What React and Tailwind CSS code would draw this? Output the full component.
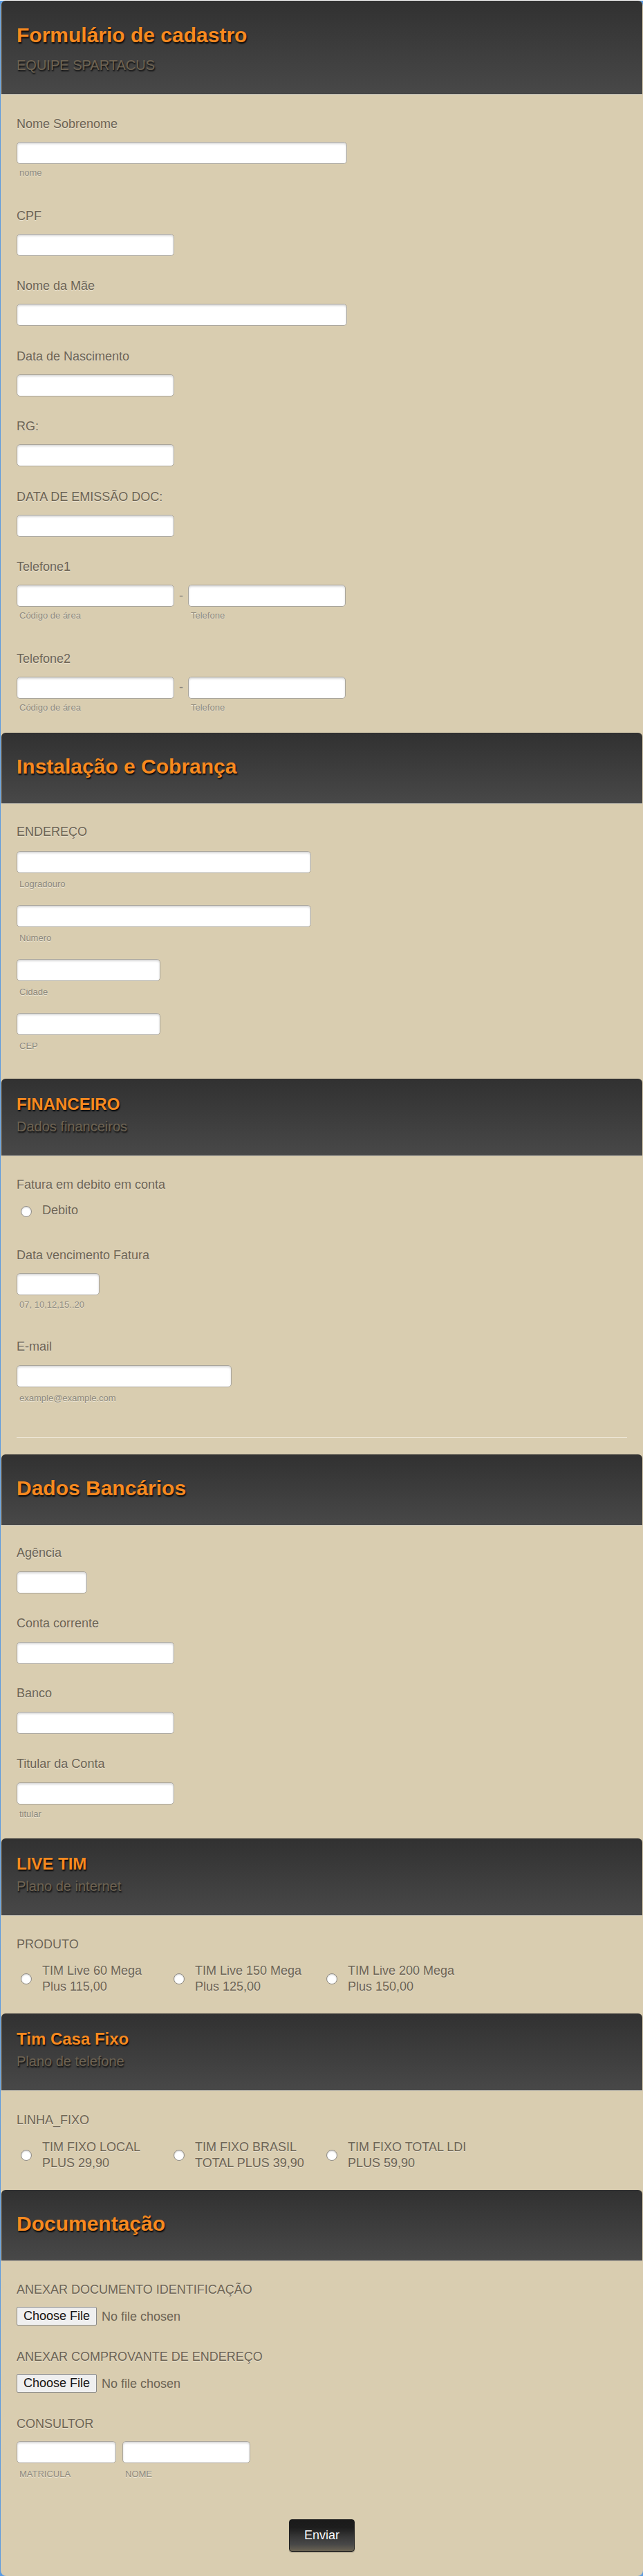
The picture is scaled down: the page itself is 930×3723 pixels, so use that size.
import React from "react";

const LABEL =
  "text-[18px] leading-[22px] text-[#6d6454] [text-shadow:0_1px_0_rgba(255,255,255,0.45)]";
const SUB =
  "text-[13px] leading-[16px] text-[#8e8a7e] pl-[4px] [text-shadow:0_1px_0_rgba(255,255,255,0.5)]";
const INPUT =
  "block h-[32px] rounded-[5px] border border-[#a9a59b] bg-white shadow-[inset_0_2px_3px_rgba(0,0,0,0.16)] outline-none";
const TITLE_SHADOW = "[text-shadow:1px_2px_2px_rgba(0,0,0,0.9)]";
const SUBTITLE =
  "text-[20px] leading-[24px] text-[#6e6352] [text-shadow:1px_2px_2px_rgba(0,0,0,0.85)]";
const HEADER_BG =
  "mx-[1px] rounded-t-[6px] bg-[linear-gradient(to_bottom,#313131,#484848)] border-b border-[#c9c4b8] pl-[22px]";

function Header({ variant, title, subtitle }) {
  if (variant === "main") {
    return (
      <div className={`${HEADER_BG} mt-[1px] pt-[32px] pb-[30px]`}>
        <div className={`text-[30px] leading-[36px] font-bold text-[#f7891f] ${TITLE_SHADOW}`}>
          {title}
        </div>
        <div className={`${SUBTITLE} mt-[13px]`}>{subtitle}</div>
      </div>
    );
  }
  if (variant === "big") {
    return (
      <div className={`${HEADER_BG} pt-[31px] pb-[35px]`}>
        <div className={`text-[30px] leading-[36px] font-bold text-[#f7891f] ${TITLE_SHADOW}`}>
          {title}
        </div>
      </div>
    );
  }
  return (
    <div className={`${HEADER_BG} pt-[23px] pb-[30px]`}>
      <div className={`text-[24px] leading-[28px] font-bold text-[#f7891f] ${TITLE_SHADOW}`}>
        {title}
      </div>
      <div className={`${SUBTITLE} mt-[6px]`}>{subtitle}</div>
    </div>
  );
}

function Field({ label, w, sub }) {
  return (
    <div className="pt-[16px] pb-[16.5px]">
      <div className={LABEL}>{label}</div>
      <input type="text" className={`${INPUT} ${w} mt-[15px]`} />
      {sub && <div className={`${SUB} pt-[5px] h-[31px]`}>{sub}</div>}
    </div>
  );
}

function PhoneField({ label }) {
  return (
    <div className="pt-[16px] pb-[16.5px]">
      <div className={LABEL}>{label}</div>
      <div className="mt-[15px] flex">
        <div>
          <input type="text" className={`${INPUT} w-[228px]`} />
          <div className={`${SUB} pt-[5px] h-[31px]`}>Código de área</div>
        </div>
        <div className="flex h-[32px] w-[20px] items-center justify-center text-[18px] text-[#8a8478]">
          -
        </div>
        <div>
          <input type="text" className={`${INPUT} w-[228px]`} />
          <div className={`${SUB} pt-[5px] h-[31px]`}>Telefone</div>
        </div>
      </div>
    </div>
  );
}

function Radio({ className = "" }) {
  return (
    <span
      className={`block h-[16px] w-[16px] shrink-0 rounded-full border border-[#8f8b84] bg-white shadow-[inset_0_1px_2px_rgba(0,0,0,0.2)] ${className}`}
    />
  );
}

function RadioGrid({ options }) {
  return (
    <div className="grid grid-cols-[221px_221px_221px]">
      {options.map(([a, b]) => (
        <div key={a} className="flex items-center pl-[6px]">
          <Radio />
          <span className="ml-[15px] w-[178px] text-[18px] leading-[23px] text-[#6d6454] [text-shadow:0_1px_0_rgba(255,255,255,0.45)]">
            {a} {b}
          </span>
        </div>
      ))}
    </div>
  );
}

function FileInput({ className = "" }) {
  return (
    <label className={`flex items-center ${className}`}>
      <span className="flex h-[27px] w-[116px] items-center justify-center rounded-[2px] border border-[#8a8a8a] bg-[#efefef] text-[18px] text-[#151515]">
        Choose File
      </span>
      <span className="ml-[7px] text-[18px] leading-[22px] text-[#6d6454]">No file chosen</span>
      <input type="file" className="hidden" />
    </label>
  );
}

export default function App() {
  return (
    <div className="bg-[#5b9be0] font-['Liberation_Sans',Arial,sans-serif]">
      <form className="ml-[1px] w-[929px] rounded-[8px] bg-[#d9cdb0] pb-[35px]">
        {/* Section 1 */}
        <Header variant="main" title="Formulário de cadastro" subtitle="EQUIPE SPARTACUS" />
        <div className="pl-[23px] pt-[15px] pb-[2px]">
          <Field label="Nome Sobrenome" w="w-[478px]" sub="nome" />
          <Field label="CPF" w="w-[228px]" />
          <Field label="Nome da Mãe" w="w-[478px]" />
          <Field label="Data de Nascimento" w="w-[228px]" />
          <Field label="RG:" w="w-[228px]" />
          <Field label="DATA DE EMISSÃO DOC:" w="w-[228px]" />
          <PhoneField label="Telefone1" />
          <PhoneField label="Telefone2" />
        </div>

        {/* Section 2 */}
        <Header variant="big" title="Instalação e Cobrança" />
        <div className="pl-[23px] pt-[29px] pb-[17px]">
          <div className={LABEL}>ENDEREÇO</div>
          <div className="mt-[17px]">
            <div>
              <input type="text" className={`${INPUT} w-[426px]`} />
              <div className={`${SUB} pt-[8px] pb-[22px]`}>Logradouro</div>
            </div>
            <div>
              <input type="text" className={`${INPUT} w-[426px]`} />
              <div className={`${SUB} pt-[8px] pb-[22px]`}>Número</div>
            </div>
            <div>
              <input type="text" className={`${INPUT} w-[208px]`} />
              <div className={`${SUB} pt-[8px] pb-[22px]`}>Cidade</div>
            </div>
            <div>
              <input type="text" className={`${INPUT} w-[208px]`} />
              <div className={`${SUB} pt-[8px] pb-[22px]`}>CEP</div>
            </div>
          </div>
        </div>

        {/* Section 3 */}
        <Header variant="small" title="FINANCEIRO" subtitle="Dados financeiros" />
        <div className="pl-[23px] pr-[23px] pt-[30px] pb-[24px]">
          <div className={LABEL}>Fatura em debito em conta</div>
          <div className="mt-[15px] flex items-start pl-[6px]">
            <Radio className="mt-[5px]" />
            <span className="ml-[15px] text-[18px] leading-[22px] text-[#6d6454] [text-shadow:0_1px_0_rgba(255,255,255,0.45)]">
              Debito
            </span>
          </div>
          <div className={`${LABEL} mt-[43px]`}>Data vencimento Fatura</div>
          <input type="text" className={`${INPUT} w-[120px] mt-[15px]`} />
          <div className={`${SUB} pt-[6px]`}>07, 10,12,15..20</div>
          <div className={`${LABEL} mt-[41px]`}>E-mail</div>
          <input type="text" className={`${INPUT} w-[311px] mt-[16px]`} />
          <div className={`${SUB} pt-[8px]`}>example@example.com</div>
          <div className="mt-[48px] h-[1px] bg-[#ece5d4]" />
        </div>

        {/* Section 4 */}
        <Header variant="big" title="Dados Bancários" />
        <div className="pl-[23px] pt-[28px] pb-[27.5px]">
          <div className={LABEL}>Agência</div>
          <input type="text" className={`${INPUT} w-[102px] mt-[16px]`} />
          <div className={`${LABEL} mt-[31.5px]`}>Conta corrente</div>
          <input type="text" className={`${INPUT} w-[228px] mt-[16px]`} />
          <div className={`${LABEL} mt-[31.5px]`}>Banco</div>
          <input type="text" className={`${INPUT} w-[228px] mt-[16px]`} />
          <div className={`${LABEL} mt-[31.5px]`}>Titular da Conta</div>
          <input type="text" className={`${INPUT} w-[228px] mt-[16px]`} />
          <div className={`${SUB} pt-[6px]`}>titular</div>
        </div>

        {/* Section 5 */}
        <Header variant="small" title="LIVE TIM" subtitle="Plano de internet" />
        <div className="pl-[23px] pt-[30px] pb-[27px]">
          <div className={LABEL}>PRODUTO</div>
          <div className="mt-[16px]">
            <RadioGrid
              options={[
                ["TIM Live 60 Mega", "Plus 115,00"],
                ["TIM Live 150 Mega", "Plus 125,00"],
                ["TIM Live 200 Mega", "Plus 150,00"],
              ]}
            />
          </div>
        </div>

        {/* Section 6 */}
        <Header variant="small" title="Tim Casa Fixo" subtitle="Plano de telefone" />
        <div className="pl-[23px] pt-[31px] pb-[27px]">
          <div className={LABEL}>LINHA_FIXO</div>
          <div className="mt-[17px]">
            <RadioGrid
              options={[
                ["TIM FIXO LOCAL", "PLUS 29,90"],
                ["TIM FIXO BRASIL", "TOTAL PLUS 39,90"],
                ["TIM FIXO TOTAL LDI", "PLUS 59,90"],
              ]}
            />
          </div>
        </div>

        {/* Section 7 */}
        <Header variant="big" title="Documentação" />
        <div className="pl-[23px] pr-[23px] pt-[30px]">
          <div className={LABEL}>ANEXAR DOCUMENTO IDENTIFICAÇÃO</div>
          <FileInput className="mt-[14px]" />
          <div className={`${LABEL} mt-[34px]`}>ANEXAR COMPROVANTE DE ENDEREÇO</div>
          <FileInput className="mt-[14px]" />
          <div className={`${LABEL} mt-[34px]`}>CONSULTOR</div>
          <div className="mt-[14px] flex gap-[9px]">
            <div>
              <input type="text" className={`${INPUT} w-[144px]`} />
              <div className={`${SUB} pt-[8px]`}>MATRICULA</div>
            </div>
            <div>
              <input type="text" className={`${INPUT} w-[185px]`} />
              <div className={`${SUB} pt-[8px]`}>NOME</div>
            </div>
          </div>
          <div className="mt-[57px] flex justify-center">
            <button
              type="button"
              className="h-[47px] w-[95px] rounded-[4px] border border-[#1f1f1f] bg-[linear-gradient(to_bottom,#1a1a1a_0%,#1d1d1d_25%,#383838_55%,#474747_78%,#6a6353_100%)] text-[18px] text-white shadow-[0_1px_1px_rgba(0,0,0,0.3)] [text-shadow:0_1px_1px_rgba(0,0,0,0.6)]"
            >
              Enviar
            </button>
          </div>
        </div>
      </form>
    </div>
  );
}
